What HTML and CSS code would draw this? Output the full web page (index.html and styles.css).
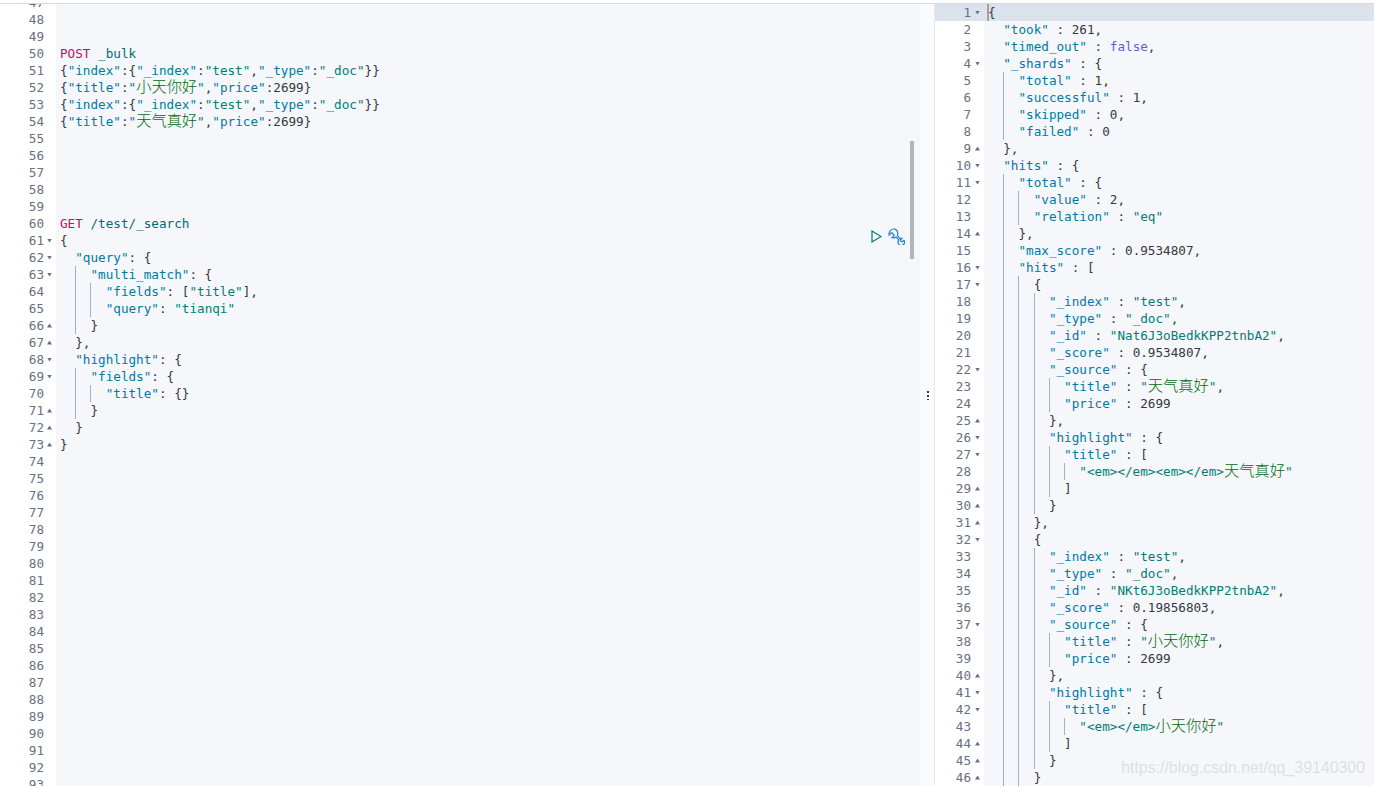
FILE: index.html
```html
<!DOCTYPE html>
<html lang="en">
<head>
<meta charset="utf-8">
<title>Console</title>
<link rel="stylesheet" href="styles.css">
</head>
<body>
<main class="app">
<section class="pane left">
<div class="r"><span class="g">47</span><span class="t"></span></div>
<div class="r"><span class="g">48</span><span class="t"></span></div>
<div class="r"><span class="g">49</span><span class="t"></span></div>
<div class="r"><span class="g">50</span><span class="t"><span class="m">POST</span> <span class="u">_bulk</span></span></div>
<div class="r"><span class="g">51</span><span class="t">{<span class="k">"index"</span>:{<span class="k">"_index"</span>:<span class="s">"test"</span>,<span class="k">"_type"</span>:<span class="s">"_doc"</span>}}</span></div>
<div class="r"><span class="g">52</span><span class="t">{<span class="k">"title"</span>:<span class="s">"<span class="c">小天你好</span>"</span>,<span class="k">"price"</span>:<span class="n">2699</span>}</span></div>
<div class="r"><span class="g">53</span><span class="t">{<span class="k">"index"</span>:{<span class="k">"_index"</span>:<span class="s">"test"</span>,<span class="k">"_type"</span>:<span class="s">"_doc"</span>}}</span></div>
<div class="r"><span class="g">54</span><span class="t">{<span class="k">"title"</span>:<span class="s">"<span class="c">天气真好</span>"</span>,<span class="k">"price"</span>:<span class="n">2699</span>}</span></div>
<div class="r"><span class="g">55</span><span class="t"></span></div>
<div class="r"><span class="g">56</span><span class="t"></span></div>
<div class="r"><span class="g">57</span><span class="t"></span></div>
<div class="r"><span class="g">58</span><span class="t"></span></div>
<div class="r"><span class="g">59</span><span class="t"></span></div>
<div class="r"><span class="g">60</span><span class="t"><span class="m">GET</span> <span class="u">/test/_search</span></span></div>
<div class="r fd"><span class="g">61</span><span class="t">{</span></div>
<div class="r fd"><span class="g">62</span><span class="t">  <span class="k">"query"</span>: {</span></div>
<div class="r fd"><span class="g">63</span><span class="t">  <i class="i"></i><span class="k">"multi_match"</span>: {</span></div>
<div class="r"><span class="g">64</span><span class="t">  <i class="i"></i><i class="i"></i><span class="k">"fields"</span>: [<span class="s">"title"</span>],</span></div>
<div class="r"><span class="g">65</span><span class="t">  <i class="i"></i><i class="i"></i><span class="k">"query"</span>: <span class="s">"tianqi"</span></span></div>
<div class="r fu"><span class="g">66</span><span class="t">  <i class="i"></i>}</span></div>
<div class="r fu"><span class="g">67</span><span class="t">  },</span></div>
<div class="r fd"><span class="g">68</span><span class="t">  <span class="k">"highlight"</span>: {</span></div>
<div class="r fd"><span class="g">69</span><span class="t">  <i class="i"></i><span class="k">"fields"</span>: {</span></div>
<div class="r"><span class="g">70</span><span class="t">  <i class="i"></i><i class="i"></i><span class="k">"title"</span>: {}</span></div>
<div class="r fu"><span class="g">71</span><span class="t">  <i class="i"></i>}</span></div>
<div class="r fu"><span class="g">72</span><span class="t">  }</span></div>
<div class="r fu"><span class="g">73</span><span class="t">}</span></div>
<div class="r"><span class="g">74</span><span class="t"></span></div>
<div class="r"><span class="g">75</span><span class="t"></span></div>
<div class="r"><span class="g">76</span><span class="t"></span></div>
<div class="r"><span class="g">77</span><span class="t"></span></div>
<div class="r"><span class="g">78</span><span class="t"></span></div>
<div class="r"><span class="g">79</span><span class="t"></span></div>
<div class="r"><span class="g">80</span><span class="t"></span></div>
<div class="r"><span class="g">81</span><span class="t"></span></div>
<div class="r"><span class="g">82</span><span class="t"></span></div>
<div class="r"><span class="g">83</span><span class="t"></span></div>
<div class="r"><span class="g">84</span><span class="t"></span></div>
<div class="r"><span class="g">85</span><span class="t"></span></div>
<div class="r"><span class="g">86</span><span class="t"></span></div>
<div class="r"><span class="g">87</span><span class="t"></span></div>
<div class="r"><span class="g">88</span><span class="t"></span></div>
<div class="r"><span class="g">89</span><span class="t"></span></div>
<div class="r"><span class="g">90</span><span class="t"></span></div>
<div class="r"><span class="g">91</span><span class="t"></span></div>
<div class="r"><span class="g">92</span><span class="t"></span></div>
<div class="r"><span class="g">93</span><span class="t"></span></div>
<div class="actions">
<svg class="run" viewBox="0 0 11 13" width="11" height="13"><path d="M1 1 L10 6.5 L1 12 Z" fill="none" stroke="#017d73" stroke-width="1.2"/></svg>
<svg class="wrench" viewBox="0 0 17 17" width="17" height="17"><path d="M7 1.1 A5 5 0 0 0 1.1 7 L3.6 4.6 L6.3 7.3 L4 9.7 C5.6 10.2 7 9.8 8.2 9 L11 12 A3.2 3.2 0 1 0 15.9 12.4 L14.2 13.8 L12.8 13.2 L12.6 11.800 L14 10.300 A3.200 3.200 0 0 0 12.200 10.700 L9.500 7.700 C10.200 5 9.500 2.500 7 1.100 Z" fill="none" stroke="#1b7fcc" stroke-width="1.150"/></svg>
</div>
<div class="thumb"></div>
</section>
<div class="resizer"><span class="dots"></span></div>
<section class="pane right">
<div class="r fd on"><span class="g">1</span><span class="t">{</span></div>
<div class="r"><span class="g">2</span><span class="t">  <span class="k">"took"</span> : <span class="n">261</span>,</span></div>
<div class="r"><span class="g">3</span><span class="t">  <span class="k">"timed_out"</span> : <span class="b">false</span>,</span></div>
<div class="r fd"><span class="g">4</span><span class="t">  <span class="k">"_shards"</span> : {</span></div>
<div class="r"><span class="g">5</span><span class="t">  <i class="i"></i><span class="k">"total"</span> : <span class="n">1</span>,</span></div>
<div class="r"><span class="g">6</span><span class="t">  <i class="i"></i><span class="k">"successful"</span> : <span class="n">1</span>,</span></div>
<div class="r"><span class="g">7</span><span class="t">  <i class="i"></i><span class="k">"skipped"</span> : <span class="n">0</span>,</span></div>
<div class="r"><span class="g">8</span><span class="t">  <i class="i"></i><span class="k">"failed"</span> : <span class="n">0</span></span></div>
<div class="r fu"><span class="g">9</span><span class="t">  },</span></div>
<div class="r fd"><span class="g">10</span><span class="t">  <span class="k">"hits"</span> : {</span></div>
<div class="r fd"><span class="g">11</span><span class="t">  <i class="i"></i><span class="k">"total"</span> : {</span></div>
<div class="r"><span class="g">12</span><span class="t">  <i class="i"></i><i class="i"></i><span class="k">"value"</span> : <span class="n">2</span>,</span></div>
<div class="r"><span class="g">13</span><span class="t">  <i class="i"></i><i class="i"></i><span class="k">"relation"</span> : <span class="s">"eq"</span></span></div>
<div class="r fu"><span class="g">14</span><span class="t">  <i class="i"></i>},</span></div>
<div class="r"><span class="g">15</span><span class="t">  <i class="i"></i><span class="k">"max_score"</span> : <span class="n">0.9534807</span>,</span></div>
<div class="r fd"><span class="g">16</span><span class="t">  <i class="i"></i><span class="k">"hits"</span> : [</span></div>
<div class="r fd"><span class="g">17</span><span class="t">  <i class="i"></i><i class="i"></i>{</span></div>
<div class="r"><span class="g">18</span><span class="t">  <i class="i"></i><i class="i"></i><i class="i"></i><span class="k">"_index"</span> : <span class="s">"test"</span>,</span></div>
<div class="r"><span class="g">19</span><span class="t">  <i class="i"></i><i class="i"></i><i class="i"></i><span class="k">"_type"</span> : <span class="s">"_doc"</span>,</span></div>
<div class="r"><span class="g">20</span><span class="t">  <i class="i"></i><i class="i"></i><i class="i"></i><span class="k">"_id"</span> : <span class="s">"Nat6J3oBedkKPP2tnbA2"</span>,</span></div>
<div class="r"><span class="g">21</span><span class="t">  <i class="i"></i><i class="i"></i><i class="i"></i><span class="k">"_score"</span> : <span class="n">0.9534807</span>,</span></div>
<div class="r fd"><span class="g">22</span><span class="t">  <i class="i"></i><i class="i"></i><i class="i"></i><span class="k">"_source"</span> : {</span></div>
<div class="r"><span class="g">23</span><span class="t">  <i class="i"></i><i class="i"></i><i class="i"></i><i class="i"></i><span class="k">"title"</span> : <span class="s">"<span class="c">天气真好</span>"</span>,</span></div>
<div class="r"><span class="g">24</span><span class="t">  <i class="i"></i><i class="i"></i><i class="i"></i><i class="i"></i><span class="k">"price"</span> : <span class="n">2699</span></span></div>
<div class="r fu"><span class="g">25</span><span class="t">  <i class="i"></i><i class="i"></i><i class="i"></i>},</span></div>
<div class="r fd"><span class="g">26</span><span class="t">  <i class="i"></i><i class="i"></i><i class="i"></i><span class="k">"highlight"</span> : {</span></div>
<div class="r fd"><span class="g">27</span><span class="t">  <i class="i"></i><i class="i"></i><i class="i"></i><i class="i"></i><span class="k">"title"</span> : [</span></div>
<div class="r"><span class="g">28</span><span class="t">  <i class="i"></i><i class="i"></i><i class="i"></i><i class="i"></i><i class="i"></i><span class="s">"&lt;em&gt;&lt;/em&gt;&lt;em&gt;&lt;/em&gt;<span class="c">天气真好</span>"</span></span></div>
<div class="r fu"><span class="g">29</span><span class="t">  <i class="i"></i><i class="i"></i><i class="i"></i><i class="i"></i>]</span></div>
<div class="r fu"><span class="g">30</span><span class="t">  <i class="i"></i><i class="i"></i><i class="i"></i>}</span></div>
<div class="r fu"><span class="g">31</span><span class="t">  <i class="i"></i><i class="i"></i>},</span></div>
<div class="r fd"><span class="g">32</span><span class="t">  <i class="i"></i><i class="i"></i>{</span></div>
<div class="r"><span class="g">33</span><span class="t">  <i class="i"></i><i class="i"></i><i class="i"></i><span class="k">"_index"</span> : <span class="s">"test"</span>,</span></div>
<div class="r"><span class="g">34</span><span class="t">  <i class="i"></i><i class="i"></i><i class="i"></i><span class="k">"_type"</span> : <span class="s">"_doc"</span>,</span></div>
<div class="r"><span class="g">35</span><span class="t">  <i class="i"></i><i class="i"></i><i class="i"></i><span class="k">"_id"</span> : <span class="s">"NKt6J3oBedkKPP2tnbA2"</span>,</span></div>
<div class="r"><span class="g">36</span><span class="t">  <i class="i"></i><i class="i"></i><i class="i"></i><span class="k">"_score"</span> : <span class="n">0.19856803</span>,</span></div>
<div class="r fd"><span class="g">37</span><span class="t">  <i class="i"></i><i class="i"></i><i class="i"></i><span class="k">"_source"</span> : {</span></div>
<div class="r"><span class="g">38</span><span class="t">  <i class="i"></i><i class="i"></i><i class="i"></i><i class="i"></i><span class="k">"title"</span> : <span class="s">"<span class="c">小天你好</span>"</span>,</span></div>
<div class="r"><span class="g">39</span><span class="t">  <i class="i"></i><i class="i"></i><i class="i"></i><i class="i"></i><span class="k">"price"</span> : <span class="n">2699</span></span></div>
<div class="r fu"><span class="g">40</span><span class="t">  <i class="i"></i><i class="i"></i><i class="i"></i>},</span></div>
<div class="r fd"><span class="g">41</span><span class="t">  <i class="i"></i><i class="i"></i><i class="i"></i><span class="k">"highlight"</span> : {</span></div>
<div class="r fd"><span class="g">42</span><span class="t">  <i class="i"></i><i class="i"></i><i class="i"></i><i class="i"></i><span class="k">"title"</span> : [</span></div>
<div class="r"><span class="g">43</span><span class="t">  <i class="i"></i><i class="i"></i><i class="i"></i><i class="i"></i><i class="i"></i><span class="s">"&lt;em&gt;&lt;/em&gt;<span class="c">小天你好</span>"</span></span></div>
<div class="r fu"><span class="g">44</span><span class="t">  <i class="i"></i><i class="i"></i><i class="i"></i><i class="i"></i>]</span></div>
<div class="r fu"><span class="g">45</span><span class="t">  <i class="i"></i><i class="i"></i><i class="i"></i>}</span></div>
<div class="r fu"><span class="g">46</span><span class="t">  <i class="i"></i><i class="i"></i>}</span></div>
<div class="mark">https://blog.csdn.net/qq_39140300</div>
</section>
</main>
</body>
</html>
```
FILE: styles.css
```css
html, body {
  margin: 0;
  height: 100%;
  overflow: hidden;
  background: #fff;
}
.app {
  display: flex;
  height: 783px;
  margin-top: 3px;
  border-top: 1px solid #d3dae6;
  box-sizing: border-box;
  overflow: hidden;
  font: 12.65px/17px "DejaVu Sans Mono", "Noto Sans CJK SC", monospace;
  color: #343741;
}
.pane {
  position: relative;
  overflow: hidden;
  display: flex;
  flex-direction: column;
}
.left {
  width: 920px;
  flex: none;
  background: #f5f7fa;
  --gutter: 56px;
}
.left .r:first-child { margin-top: -10px; }
.right {
  flex: 1;
  background: #f5f7fa;
  --gutter: 49px;
}
.resizer {
  width: 14px;
  flex: none;
  background: #fafbfd;
  border-right: 1px solid #e6e9f0;
  display: flex;
  align-items: center;
  justify-content: center;
}
.dots {
  width: 2px;
  height: 10px;
  margin-left: 1px;
  background: radial-gradient(circle at center, #343741 0 1px, transparent 1.2px) 0 0 / 2px 4px;
}
.r {
  display: flex;
  flex: none;
  height: 17px;
}
.g {
  width: var(--gutter);
  flex: none;
  background: #fff;
  color: #69707d;
  display: flex;
  justify-content: flex-end;
  align-items: center;
}
.g::after {
  content: "";
  width: 5px;
  height: 4px;
  margin: 0 4px;
  flex: none;
}
.left .g::after { margin: 0 4px 0 3px; }
.fd .g::after {
  background: #69707d;
  clip-path: polygon(0 0, 100% 0, 50% 100%);
}
.fu .g::after {
  background: #69707d;
  clip-path: polygon(50% 0, 100% 100%, 0 100%);
}
.t {
  flex: 1;
  padding-left: 4px;
  white-space: pre;
}
.on .g { background: #dde3ec; }
.on .t {
  background: #dde3ec;
  position: relative;
}
.on .t::before {
  content: "";
  position: absolute;
  left: 3px;
  top: 0;
  width: 2px;
  height: 17px;
  background: #98a2b3;
}
.i {
  display: inline-block;
  width: 2ch;
  height: 17px;
  vertical-align: top;
  box-sizing: border-box;
  border-left: 1px solid #a8aebb;
}
.k { color: #0079a5; }
.s { color: #017d73; }
.n { color: #343741; }
.b { color: #5a5fd6; }
.m { color: #c80a68; }
.u { color: #016b72; }
.c {
  color: #006a12;
  font-family: "Noto Sans CJK SC", sans-serif;
  font-size: 15.24px;
  font-weight: 300;
  line-height: 0;
}
.actions {
  position: absolute;
  left: 871px;
  top: 224px;
  display: flex;
  gap: 6px;
  align-items: center;
}
.thumb {
  position: absolute;
  left: 910px;
  top: 137px;
  width: 4px;
  height: 118px;
  background: #b0b4bd;
}
.mark {
  position: absolute;
  right: 9px;
  top: 754px;
  font: 15.9px/20px "Liberation Sans", sans-serif;
  color: rgba(190, 195, 200, .45);
}
```
